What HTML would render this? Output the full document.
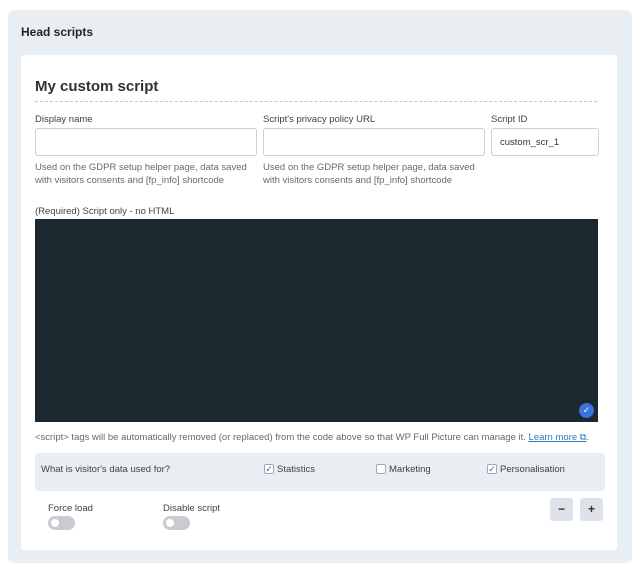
<!DOCTYPE html>
<html><head><style>
*{box-sizing:border-box;margin:0;padding:0}
body{width:640px;height:571px;background:#fff;font-family:"Liberation Sans",sans-serif;color:#3c434a;position:relative;overflow:hidden;font-size:9.5px}
.a{position:absolute}
.outer{left:8px;top:10px;width:624px;height:553px;background:#e8eef2;border-radius:7px}
.card{left:21px;top:55px;width:596px;height:495px;background:#fff;border-radius:3px}
.inp{border:1px solid #c9d0d6;border-radius:3px;background:#fff;height:28px}
.lbl{font-size:9.5px;color:#3c434a}
.cb{width:10px;height:10px;border:1px solid #a0a8b0;border-radius:2px;background:#fff}
.tg{width:27px;height:14px;border-radius:7px;background:#c8ccd0}
.tg:after{content:"";position:absolute;left:3px;top:3px;width:8px;height:8px;border-radius:50%;background:#fff}
.btn{width:23px;height:23px;background:#dde3e8;border-radius:3px;text-align:center;line-height:23px;font-weight:bold;font-size:12px;color:#333}
</style></head><body>
<div class="a outer"></div>
<div class="a" style="left:21px;top:25px;font-size:12px;font-weight:bold;color:#1d2327">Head scripts</div>
<div class="a card"></div>
<div class="a" style="left:35px;top:78px;font-size:15px;font-weight:bold;color:#2c3338">My custom script</div>
<div class="a" style="left:35px;top:101px;width:562px;border-top:1px dashed #c3c7cb"></div>
<div class="a lbl" style="left:35px;top:114px">Display name</div>
<div class="a lbl" style="left:263px;top:114px">Script's privacy policy URL</div>
<div class="a lbl" style="left:491px;top:114px">Script ID</div>
<div class="a inp" style="left:35px;top:128px;width:222px"></div>
<div class="a inp" style="left:263px;top:128px;width:222px"></div>
<div class="a inp" style="left:491px;top:128px;width:108px;padding:8px 8px;font-size:9.5px;color:#2c3338">custom_scr_1</div>
<div class="a lbl" style="left:35px;top:161px;line-height:13px;color:#646970">Used on the GDPR setup helper page, data saved<br>with visitors consents and [fp_info] shortcode</div>
<div class="a lbl" style="left:263px;top:161px;line-height:13px;color:#646970">Used on the GDPR setup helper page, data saved<br>with visitors consents and [fp_info] shortcode</div>
<div class="a lbl" style="left:35px;top:206px">(Required) Script only - no HTML</div>
<div class="a" style="left:35px;top:219px;width:563px;height:203px;background:#1b2830"></div>
<div class="a" style="left:579px;top:403px;width:15px;height:15px;border-radius:50%;background:#3a72de;color:#fff;font-size:9px;text-align:center;line-height:15px">✓</div>
<div class="a lbl" style="left:35px;top:432px;color:#646970;white-space:nowrap">&lt;script&gt; tags will be automatically removed (or replaced) from the code above so that WP Full Picture can manage it. <span style="color:#2a7bc0;text-decoration:underline">Learn more ⧉</span>.</div>
<div class="a" style="left:35px;top:453px;width:570px;height:38px;background:#e8eef2;border-radius:3px"></div>
<div class="a lbl" style="left:41px;top:464px">What is visitor's data used for?</div>
<div class="a cb" style="left:264px;top:464px;color:#2a6fd0;font-size:9px;line-height:8px;text-align:center">✓</div>
<div class="a lbl" style="left:277px;top:464px">Statistics</div>
<div class="a cb" style="left:376px;top:464px"></div>
<div class="a lbl" style="left:389px;top:464px">Marketing</div>
<div class="a cb" style="left:487px;top:464px;color:#2a6fd0;font-size:9px;line-height:8px;text-align:center">✓</div>
<div class="a lbl" style="left:500px;top:464px">Personalisation</div>
<div class="a lbl" style="left:48px;top:503px">Force load</div>
<div class="a lbl" style="left:163px;top:503px">Disable script</div>
<div class="a tg" style="left:48px;top:516px"></div>
<div class="a tg" style="left:163px;top:516px"></div>
<div class="a btn" style="left:550px;top:498px">−</div>
<div class="a btn" style="left:580px;top:498px">+</div>
</body></html>
